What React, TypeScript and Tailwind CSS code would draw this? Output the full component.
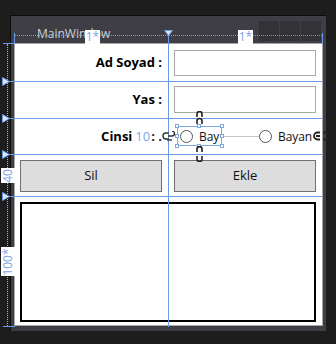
import React from "react";

// left-side row markers (grid splitter arrows)
function RowArrow({ className }: { className: string }) {
  return (
    <svg className={"absolute left-[2px] " + className} width="8" height="9" viewBox="0 0 8 9">
      <polygon points="0.5,0.5 7.5,4.5 0.5,8.5" fill="#dbe7fb" stroke="#6a9be8" strokeWidth="1" />
    </svg>
  );
}

function Handle({ className }: { className: string }) {
  return <div className={"absolute w-[4px] h-[4px] border border-[#7ea6e0] bg-white " + className} />;
}

function Radio({ label }: { label: string }) {
  return (
    <div className="flex items-center">
      <span className="w-[13px] h-[13px] rounded-full border border-[#555] bg-white" />
      <span className="ml-[6px] text-[12px] tracking-[-0.1px] text-[#111]">{label}</span>
    </div>
  );
}

export default function App() {
  return (
    <div className="relative w-[336px] h-[344px] bg-[#1d1d1d] overflow-hidden font-['Open_Sans',sans-serif]">
      {/* Pencere */}
      <div className="ml-[10px] mt-[15px] w-[316px] h-[316px] bg-[#3e3e44] border-t border-l border-[#0c0c0c] flex flex-col">
        <div className="h-[27px] flex items-start justify-between">
          <span className="ml-[26px] mt-[10px] text-[12px] leading-4 text-[#cdd2dc]">MainWindow</span>
          <div className="flex gap-[1px] mt-[5px] mr-[5px]">
            <div className="w-[20px] h-[20px] bg-[#323237]" />
            <div className="w-[20px] h-[20px] bg-[#323237]" />
            <div className="w-[20px] h-[20px] bg-[#323237]" />
          </div>
        </div>
        <div className="ml-[3px] w-[309px] h-[283px] border border-[#a6a6a6] bg-white">
          <div className="grid grid-cols-[153px_154px] grid-rows-[37px_37px_36px_42px_1fr] h-full">
            {/* Ad Soyad */}
            <div className="flex items-center justify-end pr-[6px] pt-[1px] font-bold text-[13px] text-black">Ad Soyad :</div>
            <div className="pt-[6px] pl-[6px] pr-[6px]">
              <div className="h-[26px] border border-[#a9a9a9] bg-white" />
            </div>
            {/* Yas */}
            <div className="flex items-center justify-end pr-[6px] pt-[1px] font-bold text-[13px] text-black">Yas :</div>
            <div className="pt-[5px] pl-[6px] pr-[6px]">
              <div className="h-[27px] border border-[#a9a9a9] bg-white" />
            </div>
            {/* Cinsi */}
            <div className="flex items-center justify-end pr-[6px] pt-[1px] text-[13px]">
              <span className="font-bold text-black">Cinsi</span>
              <span className="ml-[3px] text-[#7aa3e8]">10</span>
              <span className="ml-[1px] text-[#222] font-bold">: .</span>
            </div>
            <div className="flex items-center pl-[12px] pt-[1px]">
              <div className="w-[79px]">
                <Radio label="Bay" />
              </div>
              <Radio label="Bayan" />
            </div>
            {/* Butonlar */}
            <div className="pt-[6px] pl-[5px] pr-[6px]">
              <button className="w-full h-[32px] bg-[#dddddd] border border-[#707070] text-[13px] text-[#111]">Sil</button>
            </div>
            <div className="pt-[6px] pl-[6px] pr-[6px]">
              <button className="w-full h-[32px] bg-[#dddddd] border border-[#707070] text-[13px] text-[#111]">Ekle</button>
            </div>
            {/* Liste */}
            <div className="col-span-2 pt-[6px] pl-[5px] pr-[6px] pb-[4px]">
              <div className="h-[120px] border-2 border-black bg-white" />
            </div>
          </div>
        </div>
      </div>

      {/* Tasarımcı süslemeleri */}
      <div className="absolute top-[35px] left-[15px] w-[307px] border-t border-dotted border-[#6a9be8]" />
      <div className="absolute top-[33px] left-[14px] w-px h-[11px] bg-[#6a9be8]" />
      <div className="absolute top-[33px] left-[322px] w-px h-[11px] bg-[#6a9be8]" />
      <div className="absolute top-[43px] left-[3px] w-[12px] h-px bg-[#6a9be8]" />
      <div className="absolute top-[326px] left-[3px] w-[12px] h-px bg-[#6a9be8]" />
      <div className="absolute top-[44px] left-[7px] h-[282px] border-l border-dotted border-[#8fb0ea]" />

      <div className="absolute top-[30px] left-[85px] w-[15px] h-[14px] bg-white flex items-center justify-center text-[12px] leading-none text-[#7aa3e8]">1*</div>
      <div className="absolute top-[30px] left-[238px] w-[15px] h-[14px] bg-white flex items-center justify-center text-[12px] leading-none text-[#7aa3e8]">1*</div>

      <div className="absolute top-[33px] left-[168px] w-px h-[294px] bg-[#6a9be8]" />
      <svg className="absolute top-[30px] left-[164px]" width="9" height="6" viewBox="0 0 9 6">
        <polygon points="0.5,0.5 8.5,0.5 4.5,5.5" fill="#dbe7fb" stroke="#6a9be8" strokeWidth="1" />
      </svg>

      <div className="absolute top-[81px] left-[2px] w-[320px] h-px bg-[#6a9be8]" />
      <div className="absolute top-[118px] left-[2px] w-[320px] h-px bg-[#6a9be8]" />
      <div className="absolute top-[154px] left-[2px] w-[320px] h-px bg-[#6a9be8]" />
      <div className="absolute top-[196px] left-[2px] w-[320px] h-px bg-[#6a9be8]" />
      <RowArrow className="top-[77px]" />
      <RowArrow className="top-[114px]" />
      <RowArrow className="top-[150px]" />
      <RowArrow className="top-[192px]" />

      <div className="absolute top-[168px] left-[1px] w-[14px] h-[15px] bg-white flex items-center justify-center">
        <span className="-rotate-90 text-[12px] leading-none text-[#7aa3e8]">40</span>
      </div>
      <div className="absolute top-[247px] left-[1px] w-[14px] h-[29px] bg-white flex items-center justify-center">
        <span className="-rotate-90 text-[12px] leading-none text-[#7aa3e8] whitespace-nowrap">100*</span>
      </div>

      {/* Bay seçimi */}
      <div className="absolute top-[136px] left-[222px] w-[37px] h-px bg-[#c4c4c4]" />
      <div className="absolute top-[126px] left-[177px] w-[45px] h-[20px] border border-[#7ea6e0]" />
      <Handle className="top-[124px] left-[175px]" />
      <Handle className="top-[124px] left-[197px]" />
      <Handle className="top-[124px] left-[220px]" />
      <Handle className="top-[134px] left-[175px]" />
      <Handle className="top-[134px] left-[220px]" />
      <Handle className="top-[144px] left-[175px]" />
      <Handle className="top-[144px] left-[197px]" />
      <Handle className="top-[144px] left-[220px]" />

      {/* kenar boşluğu zincirleri */}
      <svg className="absolute top-[111px] left-[196px]" width="7" height="14" viewBox="0 0 7 14">
        <path d="M1 6 V3 a2.5 2.5 0 0 1 5 0 V6" fill="none" stroke="#222" strokeWidth="1.6" />
        <path d="M1 13 V10 a2.5 2.5 0 0 1 5 0 V13" fill="none" stroke="#222" strokeWidth="1.6" />
      </svg>
      <svg className="absolute top-[146px] left-[196px]" width="7" height="16" viewBox="0 0 7 16">
        <path d="M1 6 V3 a2.5 2.5 0 0 1 5 0 V6" fill="none" stroke="#222" strokeWidth="1.6" />
        <path d="M1 10 V13 a2.5 2.5 0 0 0 5 0 V10" fill="none" stroke="#222" strokeWidth="1.6" />
      </svg>
      <svg className="absolute top-[131px] left-[162px]" width="14" height="10" viewBox="0 0 14 10">
        <path d="M7 2 H4 a3 3 0 0 0 0 6 H7" fill="none" stroke="#333" strokeWidth="1.4" />
        <path d="M6 5 H10 a2.5 2.5 0 0 0 0 -5" fill="none" stroke="#333" strokeWidth="1.4" />
        <path d="M5 9 H10" fill="none" stroke="#333" strokeWidth="1.4" />
      </svg>
      <svg className="absolute top-[131px] left-[313px]" width="17" height="10" viewBox="0 0 17 10">
        <path d="M7 1.5 H4.5 a3.5 3.5 0 0 0 0 7 H7" fill="none" stroke="#222" strokeWidth="1.8" />
        <path d="M10 1.5 H12.5 a3.5 3.5 0 0 1 0 7 H10" fill="none" stroke="#222" strokeWidth="1.8" />
        <rect x="3" y="4" width="4" height="2" fill="#222" />
      </svg>
    </div>
  );
}
